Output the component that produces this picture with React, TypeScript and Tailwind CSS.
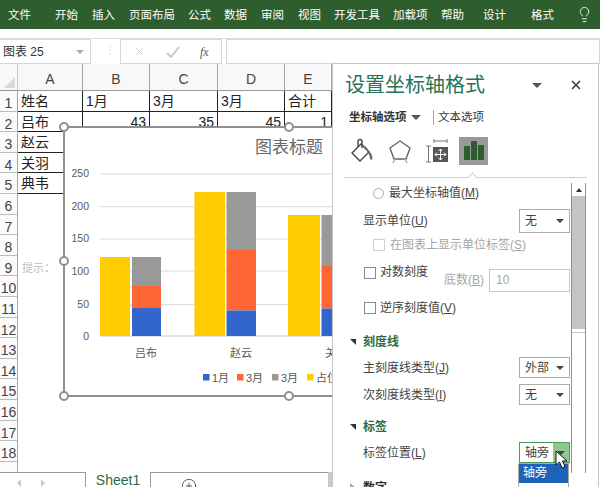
import { CirclePlus, Lightbulb, X } from "lucide-react";

const font = '"Liberation Sans", "Noto Sans CJK SC", sans-serif';

// label, gap to the previous tab
const tabs: [string, string][] = [
  ["文件", "ml-[8px]"],
  ["开始", "ml-[24px]"],
  ["插入", "ml-[14px]"],
  ["页面布局", "ml-[14px]"],
  ["公式", "ml-[13px]"],
  ["数据", "ml-[13px]"],
  ["审阅", "ml-[14px]"],
  ["视图", "ml-[14px]"],
  ["开发工具", "ml-[13px]"],
  ["加载项", "ml-[13px]"],
  ["帮助", "ml-[13.5px]"],
  ["设计", "ml-[19px]"],
  ["格式", "ml-[25px]"],
];

const columns = [
  { name: "A", w: "w-[65px]" },
  { name: "B", w: "w-[67px]" },
  { name: "C", w: "w-[68px]" },
  { name: "D", w: "w-[67px]" },
  { name: "E", w: "w-[47px]" },
];

const table = [
  ["姓名", "1月", "3月", "3月", "合计"],
  ["吕布", "43", "35", "45", "1"],
  ["赵云", "", "", "", ""],
  ["关羽", "", "", "", ""],
  ["典韦", "", "", "", ""],
];

const rows = Array.from({ length: 18 }, (_, i) => i + 1);

function Caret({ className = "" }: { className?: string }) {
  return (
    <span
      className={`inline-block w-0 h-0 border-l-[4px] border-r-[4px] border-t-[4px] border-l-transparent border-r-transparent border-t-[#444] ${className}`}
    />
  );
}

function Select({ value, hover }: { value: string; hover?: boolean }) {
  return (
    <div
      className={`ml-auto w-[51px] h-full flex items-center bg-white border text-[12px] text-[#444] ${
        hover ? "border-[#4c9a5c]" : "border-[#ababab]"
      }`}
    >
      <span className="pl-[5px] flex-1">{value}</span>
      {hover ? (
        <span className="w-[16px] h-full bg-[#8fc78f] flex items-center justify-center">
          <Caret />
        </span>
      ) : (
        <Caret className="mr-[5px]" />
      )}
    </div>
  );
}

function Check({ disabled, className = "" }: { disabled?: boolean; className?: string }) {
  return (
    <span
      className={`w-[12px] h-[12px] bg-white border shrink-0 ${
        disabled ? "border-[#d0d0d0]" : "border-[#8a8a8a]"
      } ${className}`}
    />
  );
}

function Section({ label, className }: { label: string; className: string }) {
  return (
    <div className={`h-[22px] flex items-center pl-[17px] ${className}`}>
      <span className="w-0 h-0 border-l-[6px] border-t-[6px] border-l-transparent border-t-[#333]" />
      <span className="ml-[7px] text-[12px] font-bold text-[#2f6b3f]">{label}</span>
    </div>
  );
}

function Chart() {
  const bars = [
    { yellow: [100, 30, 257], x: 132, w: 29, grey: 257, orange: 286, blue: 308 },
    { yellow: [194.5, 30.5, 192], x: 226.5, w: 29.5, grey: 192, orange: 250, blue: 310.5 },
    { yellow: [288, 32, 215], x: 321.5, w: 30, grey: 215, orange: 266, blue: 308.5 },
  ];
  return (
    <div className="absolute left-[63px] top-[62px] w-[300px] h-[271px] bg-white border-l-2 border-t-2 border-b-2 border-[#8f8f8f]">
      <svg className="absolute left-0 top-0 w-[298px] h-[267px]" viewBox="65 128 298 267">
        <text x="255" y="153" fontSize="17" fill="#6a6a6a" fontFamily={font}>
          图表标题
        </text>
        {[174, 206.7, 239, 271, 304.7].map((y) => (
          <line key={y} x1="100" x2="362" y1={y} y2={y} stroke="#d9d9d9" />
        ))}
        <line x1="100" x2="362" y1="336" y2="336" stroke="#c8c8c8" />
        {[
          ["250", 177],
          ["200", 210],
          ["150", 242],
          ["100", 275],
          ["50", 308],
          ["0", 340],
        ].map(([t, y]) => (
          <text key={t} x="89" y={y} textAnchor="end" fontSize="10.5" fill="#595959" fontFamily={font}>
            {t}
          </text>
        ))}
        {bars.map((b) => (
          <g key={b.x}>
            <rect x={b.yellow[0]} y={b.yellow[2]} width={b.yellow[1]} height={336 - b.yellow[2]} fill="#ffcc00" />
            <rect x={b.x} y={b.grey} width={b.w} height={b.orange - b.grey} fill="#999999" />
            <rect x={b.x} y={b.orange} width={b.w} height={b.blue - b.orange} fill="#ff6633" />
            <rect x={b.x} y={b.blue} width={b.w} height={336 - b.blue} fill="#3366cc" />
          </g>
        ))}
        {[
          ["吕布", 135],
          ["赵云", 230],
          ["关羽", 325],
        ].map(([t, x]) => (
          <text key={t} x={x} y="357" fontSize="11" fill="#595959" fontFamily={font}>
            {t}
          </text>
        ))}
        {[
          ["1月", 203, "#3366cc"],
          ["3月", 237, "#ff6633"],
          ["3月", 272, "#999999"],
          ["占位", 307, "#ffcc00"],
        ].map(([t, x, c]) => (
          <g key={x as number}>
            <rect x={x as number} y="374" width="6.5" height="6.5" fill={c as string} />
            <text x={(x as number) + 9} y="382" fontSize="11" fill="#595959" fontFamily={font}>
              {t}
            </text>
          </g>
        ))}
      </svg>
      {[
        "left-[-6px] top-[-6px]",
        "left-[219px] top-[-6px]",
        "left-[-6px] top-[128px]",
        "left-[-6px] top-[263px]",
        "left-[219px] top-[263px]",
      ].map((p) => (
        <span
          key={p}
          className={`absolute w-[10px] h-[10px] rounded-full bg-white border-2 border-[#8f8f8f] ${p}`}
        />
      ))}
    </div>
  );
}

function Sheet() {
  return (
    <div className="relative w-[332px] h-full overflow-hidden flex flex-col">
      <div className="h-[27px] flex shrink-0 bg-[#f8f8f8] border-b border-[#9a9a9a] text-[14px] text-[#444]">
        <div className="w-[18px] relative border-r border-[#c8c8c8]">
          <span className="absolute right-[2px] bottom-[2px] w-0 h-0 border-l-[11px] border-b-[11px] border-l-transparent border-b-[#d8d8d8]" />
        </div>
        {columns.map((c) => (
          <div key={c.name} className={`${c.w} pt-[5px] text-center border-r border-[#a8a8a8]`}>
            {c.name}
          </div>
        ))}
      </div>
      <div className="flex-1 overflow-hidden">
        {rows.map((r) => (
          <div key={r} className="h-[20.6px] flex">
            <div className="w-[18px] shrink-0 border-r border-b border-r-[#a8a8a8] border-b-[#bcbcbc] bg-[#fbfbfb] text-[14px] pt-[4px] leading-[16px] text-[#444] text-center">
              {r}
            </div>
            {r <= 5 &&
              columns.map((c, i) => (
                <div
                  key={c.name}
                  className={`${c.w} shrink-0 border-b border-r border-[#222] px-[3px] text-[14px] leading-[20px] text-[#222] ${
                    r === 2 && i > 0 ? "text-right" : ""
                  }`}
                >
                  {table[r - 1][i]}
                </div>
              ))}
            {r === 9 && <div className="pl-[4px] text-[11px] leading-[24px] text-[#bdbdbd]">提示：</div>}
          </div>
        ))}
        <div className="w-[18px] h-full border-r border-[#a8a8a8] bg-[#fbfbfb]" />
      </div>
      <div className="h-[15px] shrink-0 flex bg-white text-[#2f6b3f]">
        <div className="w-[86px] border-t border-r border-[#9a9a9a] flex items-start gap-[20px] pl-[17px] pt-[6px]">
          <span className="w-0 h-0 border-y-[4px] border-r-[4px] border-y-transparent border-r-[#ccc]" />
          <span className="w-0 h-0 border-y-[4px] border-l-[4px] border-y-transparent border-l-[#ccc]" />
        </div>
        <div className="w-[64px] text-center text-[14px] leading-[14px] pt-[1px]">Sheet1</div>
        <div className="flex-1 border-t border-l border-[#9a9a9a] pl-[30px] pt-[5px]">
          <CirclePlus size={16} strokeWidth={1.3} color="#444" />
        </div>
        <div className="w-[4px] bg-[#c8c8c8]" />
      </div>
      <Chart />
    </div>
  );
}

function PaneIcons() {
  return (
    <div className="h-[29px] flex items-center pl-[17px] mt-[8px]">
      <svg width="24" height="26" viewBox="0 0 24 26" fill="none" stroke="#444" strokeWidth="1.4">
        <path d="M11 6 2 15l8 8 9-9z" fill="#fff" />
        <path d="M8 9V3.500a2 2 0 0 1 4 0V10" />
        <path d="M14 6l5 7c3 3 4 6 3 9l-2-1c0-3-1-5-2-6z" fill="#666" stroke="none" />
      </svg>
      <svg className="ml-[14px]" width="24" height="26" viewBox="0 0 24 26" fill="none" stroke="#666" strokeWidth="1.4">
        <path d="M12 3 22 10l-4 11H6L2 10z" />
        <path d="M5 25l2-4M19 25l-2-4" stroke="#aaa" />
      </svg>
      <svg className="ml-[13px]" width="24" height="26" viewBox="0 0 24 26" fill="none" stroke="#777" strokeWidth="1">
        <path d="M9 3h13M9 1v4M22 1v4M1 8h5M1 24h5M3.500 8v16" />
        <rect x="8" y="9" width="15" height="15" fill="#555" stroke="none" />
        <path d="M15.500 11v11M10 16.500h11M13.500 13l2-2 2 2M13.500 20l2 2 2-2M12 14.500l-2 2 2 2M19 14.500l2 2-2 2" stroke="#fff" />
      </svg>
      <div className="ml-[10px] w-[29px] h-[28px] bg-[#999] flex items-end justify-center gap-[1px] pb-[5px]">
        <span className="w-[6px] h-[14px] bg-[#2f5e2e]" />
        <span className="w-[6px] h-[19px] bg-[#2f5e2e]" />
        <span className="w-[6px] h-[15px] bg-[#2f5e2e]" />
      </div>
    </div>
  );
}

function Pane() {
  return (
    <div className="relative z-10 w-[267px] -mt-px border-l border-t border-r border-[#c6c6c6] bg-white flex flex-col overflow-hidden">
      <div className="h-[36px] shrink-0 flex items-center pl-[12px] pt-[6px]">
        <span className="text-[20px] text-[#27725a]">设置坐标轴格式</span>
        <Caret className="ml-[47px] border-l-[5px] border-r-[5px] border-t-[5px] border-t-[#555]" />
        <X className="ml-[27px]" size={14} strokeWidth={3} color="#444" />
      </div>
      <div className="h-[21px] mt-[7px] shrink-0 flex items-center pl-[16px] text-[11.5px] text-[#333]">
        <span className="font-bold w-[57px] whitespace-nowrap">坐标轴选项</span>
        <Caret className="ml-[5px] border-l-[5px] border-r-[5px] border-t-[5px] border-t-[#555]" />
        <span className="ml-[12px] pl-[4px] h-[15px] leading-[15px] border-l border-[#aaa]">文本选项</span>
      </div>
      <PaneIcons />
      <div className="relative h-[13px] shrink-0 mx-[11px] w-[243px] border-b border-[#d0d0d0]">
        <span className="absolute left-[125px] top-[9px] w-[7px] h-[7px] rotate-45 bg-white border-l border-t border-[#d0d0d0]" />
      </div>

      <div className="flex-1 flex min-h-0">
        <div className="w-[238px] shrink-0 text-[12px] text-[#444] pr-[1px]">
          <div className="h-[22px] mt-[4px] flex items-center pl-[40px]">
            <span className="w-[11px] h-[11px] rounded-full border border-[#ababab]" />
            <span className="ml-[5px]">
              最大坐标轴值(<u>M</u>)
            </span>
          </div>
          <div className="h-[24px] mt-[5px] flex items-center pl-[30px]">
            <span>
              显示单位(<u>U</u>)
            </span>
            <Select value="无" />
          </div>
          <div className="h-[24px] flex items-center pl-[40px] text-[#a6a6a6]">
            <Check disabled />
            <span className="ml-[5px]">
              在图表上显示单位标签(<u>S</u>)
            </span>
          </div>
          <div className="h-[24px] mt-[11px] flex items-center pl-[31px]">
            <Check className="mb-[15px]" />
            <span className="ml-[4px] mb-[17px]">对数刻度</span>
            <span className="ml-[16px] text-[#a6a6a6]">
              底数(<u>B</u>)
            </span>
            <span className="ml-auto w-[81px] h-[23px] border border-[#c8c8c8] pl-[6px] leading-[21px] text-[#a6a6a6]">
              10
            </span>
          </div>
          <div className="h-[24px] mt-[4px] flex items-center pl-[31px]">
            <Check />
            <span className="ml-[4px]">
              逆序刻度值(<u>V</u>)
            </span>
          </div>
          <Section label="刻度线" className="mt-[11px]" />
          <div className="h-[21px] mt-[4px] flex items-center pl-[30px]">
            <span>
              主刻度线类型(<u>J</u>)
            </span>
            <Select value="外部" />
          </div>
          <div className="h-[21px] mt-[6px] flex items-center pl-[30px]">
            <span>
              次刻度线类型(<u>I</u>)
            </span>
            <Select value="无" />
          </div>
          <Section label="标签" className="mt-[11px]" />
          <div className="relative h-[21px] mt-[4px] flex items-center pl-[30px]">
            <span>
              标签位置(<u>L</u>)
            </span>
            <Select value="轴旁" hover />
            <div className="absolute right-[1px] top-[21px] w-[51px] h-[30px] bg-white border border-[#ababab] z-10">
              <div className="h-[19px] bg-[#1e63b8] text-white pl-[4px] leading-[19px]">轴旁</div>
            </div>
            <svg className="absolute left-[222px] top-[8px] z-20" width="14" height="20" viewBox="0 0 14 20">
              <path d="M1 1v14l3.500-3 2.500 6 3-1.500-2.500-5.500H12z" fill="#fff" stroke="#111" strokeWidth="1" />
            </svg>
          </div>
          <div className="h-[22px] mt-[14px] flex items-center pl-[17px]">
            <span className="w-0 h-0 border-y-[5px] border-l-[6px] border-y-transparent border-l-[#aaa]" />
            <span className="ml-[7px] font-bold text-[#333]">数字</span>
          </div>
        </div>
        <div className="w-[15px] shrink-0 mt-[5px] h-[290px] border-x border-[#8f8f8f] flex flex-col">
          <div className="h-[14px] bg-white border-b border-[#c6c6c6] flex items-center justify-center">
            <span className="w-0 h-0 border-x-[3px] border-b-[4px] border-x-transparent border-b-[#333]" />
          </div>
          <div className="h-[131px] bg-[#c4c4c4]" />
          <div className="h-[5px] bg-white border-y border-[#c6c6c6]" />
        </div>
      </div>
    </div>
  );
}

export default function App() {
  return (
    <div className="w-[600px] h-[487px] overflow-hidden bg-white flex flex-col" style={{ fontFamily: font }}>
      <div className="h-[29px] shrink-0 bg-[#2f5e2e] flex items-center text-[11.5px] text-white">
        {tabs.map(([t, m]) => (
          <span key={t} className={`${m} leading-[26px] whitespace-nowrap`}>
            {t}
          </span>
        ))}
        <Lightbulb className="ml-[22px]" size={17} strokeWidth={1.4} color="#e8f0e8" />
      </div>
      <div className="h-[35px] shrink-0 relative bg-white">
        <div className="h-[10px] border-b border-[#dcdcdc]" />
        <div className="flex h-[25px]">
          <div className="w-[91px] border border-l-0 border-[#d6d6d6] flex items-center text-[12px] text-[#333] pl-[3px]">
            <span className="flex-1">图表 25</span>
            <Caret className="mr-[6px] border-t-[#aaa]" />
          </div>
          <span className="ml-[14px] w-[2px] text-[#ccc] leading-[22px] text-[10px]">⋮</span>
          <div className="ml-[13px] w-[102px] border border-[#d6d6d6] flex items-center text-[#c8c8c8]">
            <X className="ml-[12px]" size={13} strokeWidth={1.5} />
            <svg className="ml-[20px]" width="14" height="12" viewBox="0 0 14 12" fill="none" stroke="#c8c8c8" strokeWidth="2">
              <path d="M1 7l4 4 8-10" />
            </svg>
            <span className="ml-[20px] text-[12px] italic text-[#555]" style={{ fontFamily: '"Liberation Serif", serif' }}>
              fx
            </span>
          </div>
          <div className="ml-[4px] flex-1 border border-[#d6d6d6]" />
        </div>
      </div>
      <div className="flex-1 flex min-h-0">
        <Sheet />
        <Pane />
      </div>
    </div>
  );
}
